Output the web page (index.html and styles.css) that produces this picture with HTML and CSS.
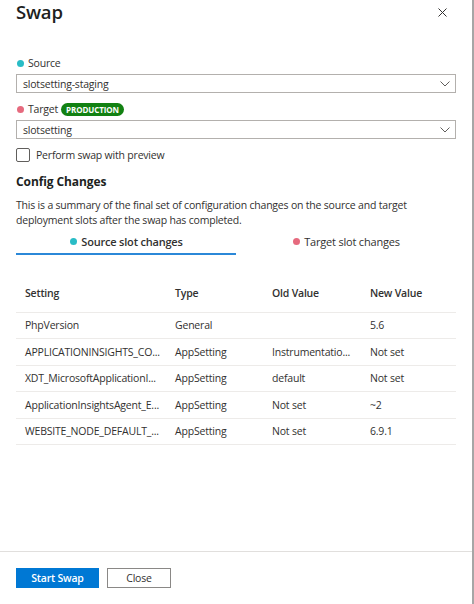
FILE: index.html
```html
<!DOCTYPE html>
<html>
<head>
  <meta charset="utf-8">
  <meta name="viewport" content="width=device-width">
  <title>Swap</title>
  <link rel="stylesheet" href="styles.css">
</head>
<body>
<div class="panel">
  <header class="panelHeader">
    <h1>Swap</h1>
    <button class="closeBtn" aria-label="Close">
      <svg width="9" height="9" viewBox="0 0 9 9"><path d="M0.5 0.5 L8.5 8.5 M8.5 0.5 L0.5 8.5" stroke="#323130" stroke-width="1" fill="none"/></svg>
    </button>
  </header>

  <div class="panelBody">
    <div class="field">
      <label class="fieldLabel"><span class="dot source"></span>Source</label>
      <div class="select">
        <span>slotsetting-staging</span>
        <svg width="10" height="6" viewBox="0 0 10 6"><path d="M0.5 0.5 L5 5 L9.5 0.5" stroke="#605e5c" stroke-width="1" fill="none"/></svg>
      </div>
    </div>

    <div class="field">
      <label class="fieldLabel"><span class="dot target"></span>Target <span class="badge">PRODUCTION</span></label>
      <div class="select">
        <span>slotsetting</span>
        <svg width="10" height="6" viewBox="0 0 10 6"><path d="M0.5 0.5 L5 5 L9.5 0.5" stroke="#605e5c" stroke-width="1" fill="none"/></svg>
      </div>
    </div>

    <label class="check">
      <span class="box"></span>
      Perform swap with preview
    </label>

    <h2>Config Changes</h2>
    <p class="desc">This is a summary of the final set of configuration changes on the source and target deployment slots after the swap has completed.</p>

    <div class="tabs">
      <div class="tab active"><span class="dot source"></span>Source slot changes</div>
      <div class="tab"><span class="dot target"></span>Target slot changes</div>
    </div>

    <table class="changes">
      <thead>
        <tr>
          <th class="colSetting">Setting</th>
          <th class="colType">Type</th>
          <th class="colOld">Old Value</th>
          <th>New Value</th>
        </tr>
      </thead>
      <tbody>
        <tr><td>PhpVersion</td><td>General</td><td></td><td>5.6</td></tr>
        <tr><td>APPLICATIONINSIGHTS_CO...</td><td>AppSetting</td><td>Instrumentatio...</td><td>Not set</td></tr>
        <tr><td>XDT_MicrosoftApplicationI...</td><td>AppSetting</td><td>default</td><td>Not set</td></tr>
        <tr><td>ApplicationInsightsAgent_E...</td><td>AppSetting</td><td>Not set</td><td>~2</td></tr>
        <tr><td>WEBSITE_NODE_DEFAULT_...</td><td>AppSetting</td><td>Not set</td><td>6.9.1</td></tr>
      </tbody>
    </table>
  </div>

  <footer class="panelFooter">
    <button class="btn primary">Start Swap</button>
    <button class="btn">Close</button>
  </footer>
</div>
</body>
</html>
```

FILE: styles.css
```css
* {
  box-sizing: border-box;
}

html, body {
  margin: 0;
  height: 100%;
  background: #fff;
}

body {
  font-family: "Open Sans", "Noto Sans", sans-serif;
  font-size: 10.5px;
  letter-spacing: -0.2px;
  color: #323130;
}

.panel {
  height: 604px;
  width: 474px;
  border-right: 2px solid #a6a6a6;
  display: flex;
  flex-direction: column;
}

/* header */
.panelHeader {
  display: flex;
  justify-content: space-between;
  align-items: center;
  padding: 0 25px 0 16px;
  height: 24px;
}

.panelHeader h1 {
  margin: 0;
  font-size: 18.5px;
  font-weight: 600;
  letter-spacing: -0.2px;
  color: #201f1e;
  line-height: 24px;
}

.closeBtn {
  border: 0;
  background: none;
  padding: 0;
  display: flex;
}

/* body */
.panelBody {
  flex: 1;
  padding: 30px 16px 0 16px;
}

.field {
  margin-bottom: 7px;
}

.fieldLabel {
  display: flex;
  align-items: center;
  height: 18px;
  margin-bottom: 2px;
}

.dot {
  display: inline-block;
  width: 7px;
  height: 7px;
  border-radius: 50%;
  margin: 0 4px 0 1px;
}

.dot.source {
  background: #29bcc6;
}

.dot.target {
  background: #e66a7e;
}

.badge {
  background: #128112;
  color: #fff;
  font-size: 8px;
  font-weight: 700;
  letter-spacing: -0.1px;
  border-radius: 7px;
  padding: 1px 5px;
  margin-left: 3px;
  line-height: 11px;
}

.select {
  display: flex;
  justify-content: space-between;
  align-items: center;
  height: 19px;
  border: 1px solid #b3b0ad;
  padding: 0 5px 0 6px;
}

.check {
  display: flex;
  align-items: center;
  height: 16px;
  margin-top: 8px;
}

.box {
  width: 14px;
  height: 14px;
  border: 1px solid #605e5c;
  border-radius: 2px;
  margin-right: 6px;
}

h2 {
  margin: 10px 0 0 0;
  font-size: 12px;
  font-weight: 700;
  letter-spacing: -0.1px;
  color: #201f1e;
  line-height: 18px;
}

.desc {
  margin: 7px 0 0 0;
  line-height: 15px;
}

/* tabs */
.tabs {
  display: flex;
  margin-top: 1px;
}

.tab {
  width: 221px;
  height: 26px;
  display: flex;
  justify-content: center;
  align-items: center;
  border-bottom: 2px solid transparent;
  font-size: 11px;
}

.tab.active {
  border-bottom-color: #2b88d8;
  font-weight: 600;
}

/* table */
.changes {
  width: 440px;
  border-collapse: collapse;
  margin-top: 19px;
  table-layout: fixed;
}

.changes th,
.changes td {
  text-align: left;
  padding: 0 0 0 9px;
  border-bottom: 1px solid #edebe9;
  white-space: nowrap;
  overflow: hidden;
}

.changes th {
  font-weight: 600;
  height: 38px;
}

.changes td {
  height: 26.5px;
}

.colSetting {
  width: 150px;
}

.colType {
  width: 97px;
}

.colOld {
  width: 98px;
}

/* footer */
.panelFooter {
  border-top: 1px solid #e1dfdd;
  height: 53px;
  padding: 16px 16px 0 16px;
  display: flex;
  gap: 8px;
  align-items: flex-start;
}

.btn {
  font-family: inherit;
  font-size: 10.5px;
  letter-spacing: -0.2px;
  height: 20px;
  min-width: 64px;
  border: 1px solid #8a8886;
  background: #fff;
  color: #323130;
  padding: 0 12px;
}

.btn.primary {
  background: #0078d4;
  border-color: #0078d4;
  color: #fff;
  font-weight: 600;
  min-width: 83px;
}
```
